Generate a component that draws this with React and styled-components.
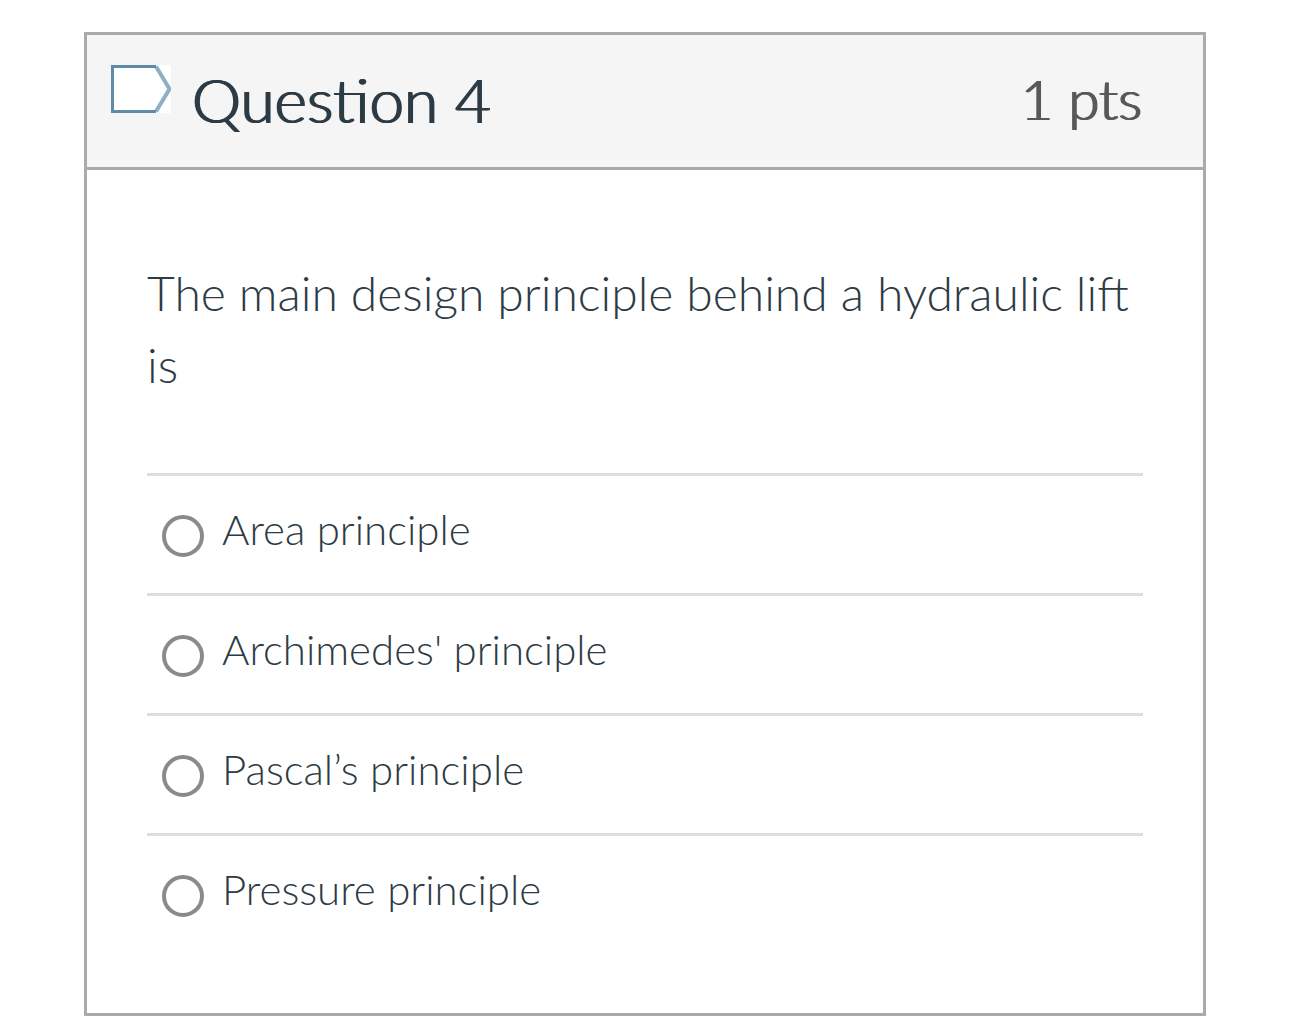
import { useState } from "react";
import styled, { createGlobalStyle } from "styled-components";

const GlobalStyle = createGlobalStyle`
  body {
    margin: 0;
    background: #ffffff;
    color: #2d3b45;
    font-family: Lato, "Open Sans", sans-serif;
    font-weight: 300;
  }
`;

const Page = styled.main`
  padding: 32px 84px 8px;
`;

const Card = styled.form`
  border: 3px solid #aaaaaa;
`;

const Header = styled.header`
  display: flex;
  align-items: flex-start;
  gap: 20px;
  padding: 30px 62px 34px 24px;
  background: #f5f5f5;
  border-bottom: 3px solid #aaaaaa;
  line-height: 68px;
  text-shadow: 1px 0 currentColor, 2px 0 currentColor;
`;

const FlagButton = styled.button`
  display: block;
  padding: 0;
  border: none;
  background: none;
  cursor: pointer;

  svg {
    display: block;
  }
`;

const Title = styled.h2`
  flex: 1;
  margin: 0;
  font-size: 62px;
  font-weight: 300;
`;

const Points = styled.span`
  color: #595959;
  font-size: 56px;
`;

const Body = styled.fieldset`
  margin: 0;
  padding: 87px 60px 60px;
  border: none;
`;

const Prompt = styled.legend`
  float: left;
  width: 100%;
  margin-bottom: 72px;
  padding: 0;
  font-size: 48px;
  line-height: 72px;
`;

const Answers = styled.div`
  clear: both;
`;

const Answer = styled.label`
  display: flex;
  align-items: flex-start;
  gap: 18px;
  padding: 22px 15px 32px;
  border-top: 3px solid #dddddd;
  font-size: 42px;
  line-height: 63px;
  cursor: pointer;
`;

const Radio = styled.input`
  appearance: none;
  box-sizing: border-box;
  width: 42px;
  height: 42px;
  margin: 17px 0 0;
  border: 4px solid #8a898e;
  border-radius: 50%;
  background: #ffffff;

  &:checked {
    border-width: 12px;
  }
`;

const answers = [
  "Area principle",
  "Archimedes' principle",
  "Pascal’s principle",
  "Pressure principle",
];

const Question = () => {
  const [selected, setSelected] = useState(null);

  return (
    <Card>
      <Header>
        <FlagButton type="button" aria-label="Flag question">
          <svg width="60" height="48" viewBox="0 0 60 48">
            <rect width="60" height="48" fill="#ffffff" />
            <path
              d="M45 1.5L58.5 24L45 46.5"
              fill="none"
              stroke="#8fb0c4"
              strokeWidth="4"
            />
            <path
              d="M45 1.5H1.5V46.5H45"
              fill="none"
              stroke="#5f8ba6"
              strokeWidth="3"
            />
          </svg>
        </FlagButton>
        <Title>Question 4</Title>
        <Points>1 pts</Points>
      </Header>
      <Body>
        <Prompt>The main design principle behind a hydraulic lift is</Prompt>
        <Answers>
          {answers.map((answer) => (
            <Answer key={answer}>
              <Radio
                type="radio"
                name="answer"
                value={answer}
                checked={selected === answer}
                onChange={() => setSelected(answer)}
              />
              {answer}
            </Answer>
          ))}
        </Answers>
      </Body>
    </Card>
  );
};

const App = () => (
  <>
    <GlobalStyle />
    <Page>
      <Question />
    </Page>
  </>
);

export default App;
